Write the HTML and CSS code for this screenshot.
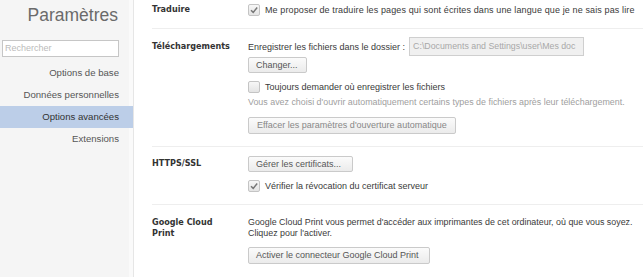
FILE: index.html
```html
<!DOCTYPE html>
<html lang="fr">
<head>
<meta charset="utf-8">
<title>Paramètres</title>
<link rel="stylesheet" href="styles.css">
</head>
<body>
<div class="page">
  <aside class="sidebar">
    <h1 class="title">Paramètres</h1>
    <div class="search">Rechercher</div>
    <nav class="nav">
      <div class="nav-item">Options de base</div>
      <div class="nav-item">Données personnelles</div>
      <div class="nav-item selected">Options avancées</div>
      <div class="nav-item">Extensions</div>
    </nav>
  </aside>
  <main class="main">
    <section class="section s-translate">
      <div class="label">Traduire</div>
      <div class="content">
        <div class="check-row cr-translate">
          <span class="checkbox checked"><svg viewBox="0 0 12 12" width="12" height="12"><path d="M3 6.2 L5.2 8.4 L9.2 3.6" fill="none" stroke="#777" stroke-width="1.5"/></svg></span>
          <span>Me proposer de traduire les pages qui sont écrites dans une langue que je ne sais pas lire</span>
        </div>
      </div>
    </section>
    <section class="section s-downloads">
      <div class="label label-dl">Téléchargements</div>
      <div class="content">
        <div class="folder-row">
          <span>Enregistrer les fichiers dans le dossier :</span>
          <span class="path">C:\Documents and Settings\user\Mes doc</span>
        </div>
        <div class="btn btn-change">Changer...</div>
        <div class="check-row cr-ask">
          <span class="checkbox"></span>
          <span>Toujours demander où enregistrer les fichiers</span>
        </div>
        <div class="note">Vous avez choisi d'ouvrir automatiquement certains types de fichiers après leur téléchargement.</div>
        <div class="btn btn-clear disabled">Effacer les paramètres d'ouverture automatique</div>
      </div>
    </section>
    <section class="section s-https">
      <div class="label label-https">HTTPS/SSL</div>
      <div class="content">
        <div class="btn btn-cert">Gérer les certificats...</div>
        <div class="check-row cr-revoke">
          <span class="checkbox checked"><svg viewBox="0 0 12 12" width="12" height="12"><path d="M3 6.2 L5.2 8.4 L9.2 3.6" fill="none" stroke="#777" stroke-width="1.5"/></svg></span>
          <span>Vérifier la révocation du certificat serveur</span>
        </div>
      </div>
    </section>
    <section class="section s-print">
      <div class="label label-print">Google Cloud<br>Print</div>
      <div class="content">
        <div class="para">Google Cloud Print vous permet d'accéder aux imprimantes de cet ordinateur, où que vous soyez.<br>Cliquez pour l'activer.</div>
        <div class="btn btn-print">Activer le connecteur Google Cloud Print</div>
      </div>
    </section>
  </main>
</div>
</body>
</html>
```
FILE: styles.css
```css
* { box-sizing: border-box; }
html, body { margin: 0; padding: 0; background: #fff; }
body {
  font-family: "Liberation Sans", Arial, sans-serif;
  font-size: 9px;
  color: #3a3a3a;
  width: 643px;
  height: 277px;
  overflow: hidden;
}
.page { display: flex; height: 277px; }

.sidebar {
  width: 134px;
  flex: none;
  background: #f5f5f5;
  border-right: 1px solid #e6e6e6;
  box-shadow: inset -4px 0 0 #fafafa;
}
.title {
  margin: 0;
  padding: 5px 15px 0 0;
  height: 40px;
  text-align: right;
  font-weight: normal;
  font-size: 17.5px;
  line-height: 21px;
  color: #6a6a6a;
}
.search {
  margin-left: 2px;
  width: 117px;
  height: 17px;
  background: #fff;
  border: 1px solid #c6c6c6;
  color: #bbb;
  font-size: 9px;
  line-height: 15px;
  padding-left: 2px;
}
.nav { margin-top: 5px; }
.nav-item {
  height: 22px;
  line-height: 22px;
  text-align: right;
  padding-right: 14px;
  color: #555;
  font-size: 9.6px;
}
.nav-item.selected { background: #bccee8; color: #333; }

.main { flex: 1; padding-left: 18px; min-width: 0; }
.section {
  display: grid;
  grid-template-columns: 96px 1fr;
  border-bottom: 1px solid #eeeeee;
}
.label {
  font-family: "DejaVu Sans", Verdana, sans-serif;
  font-weight: bold;
  font-size: 8.1px;
  color: #333;
  line-height: 11px;
}
.content { min-width: 0; }

.s-translate { padding: 3px 0 12px; }
.s-translate .label { padding-top: 1px; }
.s-downloads { padding: 0 0 12px; }
.s-https { padding: 0 0 12px; }
.s-print { padding: 12px 0 14px; border-bottom: none; }

.check-row {
  display: flex;
  align-items: center;
  gap: 5px;
  height: 13px;
  white-space: nowrap;
}
.cr-translate { font-size: 9px; letter-spacing: 0.12px; }
.checkbox {
  width: 12px;
  height: 12px;
  flex: none;
  border: 1px solid #c4c4c4;
  border-radius: 2px;
  background: linear-gradient(#f7f7f7, #e4e4e4);
  display: flex;
  align-items: center;
  justify-content: center;
}
.checkbox svg { display: block; margin: -1px; }

.label-dl { padding-top: 12px; }
.folder-row {
  margin-top: 8px;
  display: flex;
  align-items: center;
  gap: 4px;
  white-space: nowrap;
  height: 19px;
}
.path {
  width: 175px;
  height: 19px;
  border: 1px solid #cfcfcf;
  background: #f0f0f0;
  color: #a8a8a8;
  font-size: 8.8px;
  line-height: 17px;
  padding-left: 3px;
  overflow: hidden;
  white-space: nowrap;
}
.btn {
  display: inline-block;
  height: 16px;
  line-height: 14px;
  padding: 0 7px;
  border: 1px solid #cacaca;
  border-radius: 2px;
  background: linear-gradient(#fbfbfb, #ebebeb);
  color: #555;
  white-space: nowrap;
}
.btn-change { margin-top: 1px; min-width: 59px; }
.cr-ask { margin-top: 7px; }
.note { margin-top: 4px; color: #a0a0a0; line-height: 11px; white-space: nowrap; font-size: 8.9px; }
.btn-clear { margin-top: 9px; height: 17px; line-height: 15px; min-width: 205px; padding: 0 8px; color: #888; }

.label-https { padding-top: 11px; }
.btn-cert { margin-top: 9px; min-width: 105px; }
.cr-revoke { margin-top: 7px; }

.label-print { line-height: 11px; padding-top: 0; }
.para { line-height: 11px; white-space: nowrap; font-size: 8.9px; }
.btn-print { margin-top: 8px; height: 17px; line-height: 15px; min-width: 182px; }
```
